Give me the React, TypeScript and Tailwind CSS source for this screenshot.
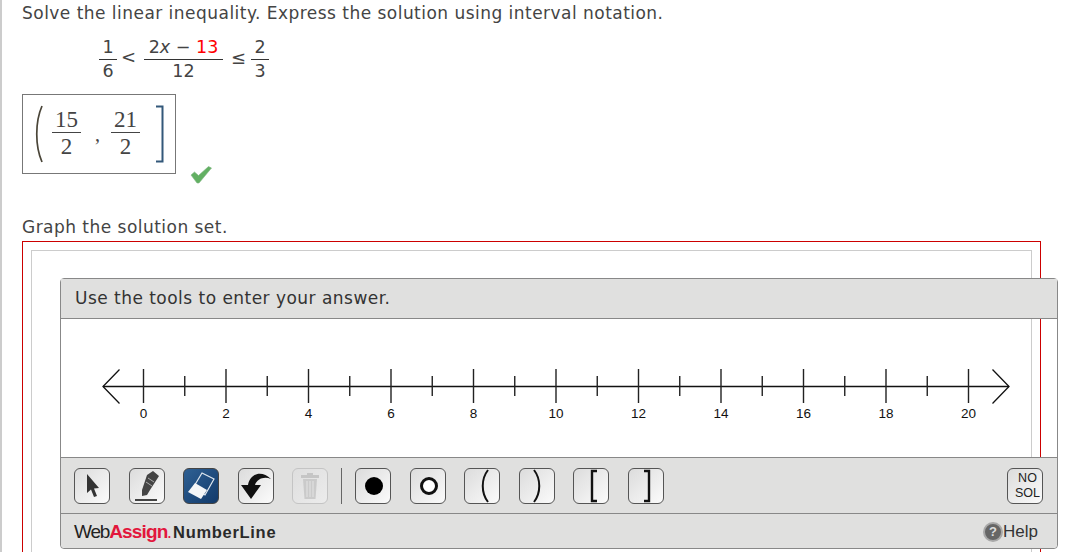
import type { ReactNode } from 'react';

const verdana = "font-['DejaVu_Sans',sans-serif]";
const arial = "font-['Liberation_Sans',sans-serif]";

function Fraction({ top, bottom, width }: { top: ReactNode; bottom: ReactNode; width: string }) {
  return (
    <div className={`flex flex-col items-center ${width}`}>
      <div className="flex h-[23px] items-center leading-none">{top}</div>
      <div className="h-px w-full bg-[#333]" />
      <div className="flex h-[24px] items-center leading-none">{bottom}</div>
    </div>
  );
}

function SerifFraction({ top, bottom }: { top: string; bottom: string }) {
  return (
    <div className="flex w-[29px] flex-col items-center font-['Liberation_Serif',serif] text-[23px] text-[#444]">
      <div className="flex h-[24px] items-center leading-none">{top}</div>
      <div className="h-px w-full bg-[#444]" />
      <div className="flex h-[28px] items-center leading-none">{bottom}</div>
    </div>
  );
}

function ToolButton({ children, active, disabled }: { children?: ReactNode; active?: boolean; disabled?: boolean }) {
  return (
    <div
      className={`flex h-9 w-9 shrink-0 items-center justify-center rounded-[6px] border ${
        active
          ? 'border-[#444] bg-gradient-to-br from-[#2f6194] to-[#123a6b]'
          : disabled
            ? 'border-[#c4c4c4] bg-gradient-to-br from-[#dedede] to-[#ececec]'
            : 'border-[#555] bg-gradient-to-br from-[#dcdcdc] to-[#fbfbfb]'
      }`}
    >
      {children}
    </div>
  );
}

function NumberLine() {
  const ticks = Array.from({ length: 21 }, (_, i) => i);
  const x = (i: number) => 82.5 + i * 41.25;
  return (
    <svg width="996" height="138" viewBox="0 0 996 138" className="block">
      <line x1="42" y1="67.5" x2="948" y2="67.5" stroke="#111" strokeWidth="1.3" />
      <path d="M58.5 50.5 L42 67.5 L58.5 84.5" fill="none" stroke="#111" strokeWidth="1.3" />
      <path d="M931.5 50.5 L948 67.5 L931.5 84.5" fill="none" stroke="#111" strokeWidth="1.3" />
      {ticks.map((i) => (
        <g key={i}>
          <line
            x1={x(i)}
            x2={x(i)}
            y1={i % 2 === 0 ? 50 : 57}
            y2={i % 2 === 0 ? 84 : 77}
            stroke="#222"
            strokeWidth="1.4"
          />
          {i % 2 === 0 && (
            <text x={x(i)} y="99" textAnchor="middle" fontSize="13.5" fill="#111" fontFamily="Liberation Sans, sans-serif">
              {i}
            </text>
          )}
        </g>
      ))}
    </svg>
  );
}

export default function App() {
  return (
    <div className={`h-[552px] w-[1075px] overflow-hidden bg-white ${verdana} text-[#444]`}>
      <div className="h-full border-l-2 border-[#ccc] pl-5">
        <p className="pt-[3px] text-[17px] leading-[20px] tracking-[0.47px] whitespace-nowrap">
          Solve the linear inequality. Express the solution using interval notation.
        </p>

        {/* inequality */}
        <div className="mt-[13px] ml-[77px] flex h-[48px] items-center text-[17.5px] text-[#444]">
          <Fraction top="1" bottom="6" width="w-[18px]" />
          <span className="mb-[8px] ml-[4px] w-[23px] text-[18px]">&lt;</span>
          <Fraction
            width="w-[79px]"
            top={
              <span className="whitespace-nowrap">
                2<i>x</i> − <span className="text-[#f00]">13</span>
              </span>
            }
            bottom="12"
          />
          <span className="mb-[6px] ml-[8px] w-[20px] text-[18px]">≤</span>
          <Fraction top="2" bottom="3" width="w-[18px]" />
        </div>

        {/* answer */}
        <div className="mt-[10px] flex items-end">
          <div className="flex h-[80px] w-[154px] items-center border border-[#777] pl-[9px]">
            <svg width="12" height="60" viewBox="0 0 12 60" className="shrink-0">
              <path d="M10 2 C3 18 3 42 10 58" fill="none" stroke="#4a4538" strokeWidth="1.7" />
            </svg>
            <div className="ml-[8px] flex items-center">
              <SerifFraction top="15" bottom="2" />
              <span className="mr-[15px] ml-[14px] w-[1px] font-['Liberation_Serif',serif] text-[20px] leading-none">,</span>
              <SerifFraction top="21" bottom="2" />
            </div>
            <svg width="8" height="58" viewBox="0 0 8 58" className="ml-[16px] shrink-0">
              <path d="M0 1.5 H6.5 V56.5 H0" fill="none" stroke="#33587a" strokeWidth="2" />
            </svg>
          </div>
          <svg width="22" height="19" viewBox="0 0 22 19" className="mb-[-10px] ml-[14px]">
            <path d="M1 10 L4.5 7 L8.5 10.5 L18.5 1.5 L21.5 3 L9 18 L7 18 Z" fill="#62b062" stroke="#7fb583" strokeWidth="0.6" />
          </svg>
        </div>

        <p className="mt-[43px] text-[17px] leading-[20px] tracking-[0.47px]">Graph the solution set.</p>

        {/* graph */}
        <div className="mt-[4px] h-[400px] w-[1019px] border border-[#c00] pt-2 pl-2">
          <div className="h-[400px] w-[1001px] border border-b-0 border-[#ccc] pt-[27px] pl-[28px]">
            <div className="w-[998px] rounded-[4px] border border-[#888]">
              <div className="flex h-[40px] items-center border-b border-[#888] bg-[#e0e0df] pl-[14px] text-[17px] tracking-[0.47px] text-[#333]">
                Use the tools to enter your answer.
              </div>
              <div className="h-[138px]">
                <NumberLine />
              </div>
              <div className="flex h-[57px] items-center border-t border-b border-[#888] bg-[#e0e0df] pr-[14px] pl-[13px]">
                <div className="flex items-center gap-[18.5px]">
                  <ToolButton>
                    <svg width="18" height="26" viewBox="0 0 18 26">
                      <path d="M4 1 L4 20 L8 16.5 L11 24 L14 23 L11 15.5 L16 15 Z" fill="#333" />
                    </svg>
                  </ToolButton>
                  <ToolButton>
                    <svg width="26" height="32" viewBox="0 0 26 32">
                      <path d="M13 5 L19 1 L25 6 L16 20 L13 25 L8 26 L8 20 Z" fill="#444" />
                      <path d="M14 8 L20 12 M12 12 L18 16" stroke="#aaa" strokeWidth="1" />
                      <rect x="1" y="29" width="22" height="2" fill="#444" />
                    </svg>
                  </ToolButton>
                  <ToolButton active>
                    <svg width="30" height="30" viewBox="0 0 30 30">
                      <path d="M16 2 L28 8 L19 24 L7 17 Z" fill="none" stroke="#dfe7ef" strokeWidth="1.2" />
                      <path d="M9 12 L21 19 L15 28 L2 21 Z" fill="#f4f6f8" />
                    </svg>
                  </ToolButton>
                  <ToolButton>
                    <svg width="32" height="30" viewBox="0 0 32 30">
                      <path d="M31 8 C22 -1 10 2 8 14 L1 14 L11 28 L21 14 L15 14 C17 8 24 5 31 8 Z" fill="#111" />
                    </svg>
                  </ToolButton>
                  <ToolButton disabled>
                    <svg width="20" height="28" viewBox="0 0 20 28" className="opacity-90">
                      <rect x="1" y="3" width="18" height="3" fill="#c2c2c2" />
                      <rect x="7" y="1" width="6" height="3" fill="#c2c2c2" />
                      <path d="M3 7 H17 L15.5 27 H4.5 Z" fill="#c8c8c8" />
                      <path d="M7 9 V25 M10 9 V25 M13 9 V25" stroke="#e0e0e0" strokeWidth="1.2" />
                    </svg>
                  </ToolButton>
                </div>
                <div className="mx-[13px] h-9 w-px bg-[#666]" />
                <div className="flex items-center gap-[18.5px]">
                  <ToolButton>
                    <div className="ml-[1px] h-[18px] w-[18px] rounded-full bg-black" />
                  </ToolButton>
                  <ToolButton>
                    <div className="ml-[2px] h-[18px] w-[18px] rounded-full border-[3px] border-[#111] bg-white" />
                  </ToolButton>
                  <ToolButton>
                    <svg width="12" height="34" viewBox="0 0 12 34" className="ml-[5px]">
                      <path d="M9 1 C2 10 2 24 9 33" fill="none" stroke="#111" strokeWidth="2" />
                    </svg>
                  </ToolButton>
                  <ToolButton>
                    <svg width="12" height="34" viewBox="0 0 12 34" className="ml-[1px]">
                      <path d="M3 1 C10 10 10 24 3 33" fill="none" stroke="#111" strokeWidth="2" />
                    </svg>
                  </ToolButton>
                  <ToolButton>
                    <svg width="8" height="34" viewBox="0 0 8 34" className="ml-[6px]">
                      <path d="M7 2 H2 V32 H7" fill="none" stroke="#111" strokeWidth="2.4" />
                    </svg>
                  </ToolButton>
                  <ToolButton>
                    <svg width="8" height="34" viewBox="0 0 8 34" className="ml-[3px]">
                      <path d="M1 2 H6 V32 H1" fill="none" stroke="#111" strokeWidth="2.4" />
                    </svg>
                  </ToolButton>
                </div>
                <div className="ml-auto">
                  <ToolButton>
                    <span className={`${arial} ml-[5px] text-center text-[12.5px] leading-[15px] text-[#222]`}>
                      NO
                      <br />
                      SOL
                    </span>
                  </ToolButton>
                </div>
              </div>
              <div className="flex h-[34px] items-center rounded-b-[4px] bg-[#e0e0df] pt-[2px] pr-[19px] pl-[13px]">
                <div className="flex items-baseline">
                  <span className={`${arial} text-[19px] font-normal tracking-[-1.2px] text-[#222]`}>Web</span>
                  <span className={`${arial} text-[19px] font-bold tracking-[-0.8px] text-[#e2173d]`}>Assign</span>
                  <span className={`${arial} text-[12px] font-bold text-[#e2173d]`}>.</span>
                  <span className={`${arial} ml-[2px] text-[16.5px] font-bold tracking-[0.7px] text-[#2a2a2a]`}>NumberLine</span>
                </div>
                <div className="ml-auto flex items-center">
                  <div className={`flex h-[20px] w-[20px] items-center justify-center rounded-full border-2 border-[#a8a8a8] bg-[#666] ${arial} text-[13px] font-bold text-[#ddd]`}>
                    ?
                  </div>
                  <span className={`${arial} text-[17px] text-[#333]`}>Help</span>
                </div>
              </div>
            </div>
          </div>
        </div>
      </div>
    </div>
  );
}
